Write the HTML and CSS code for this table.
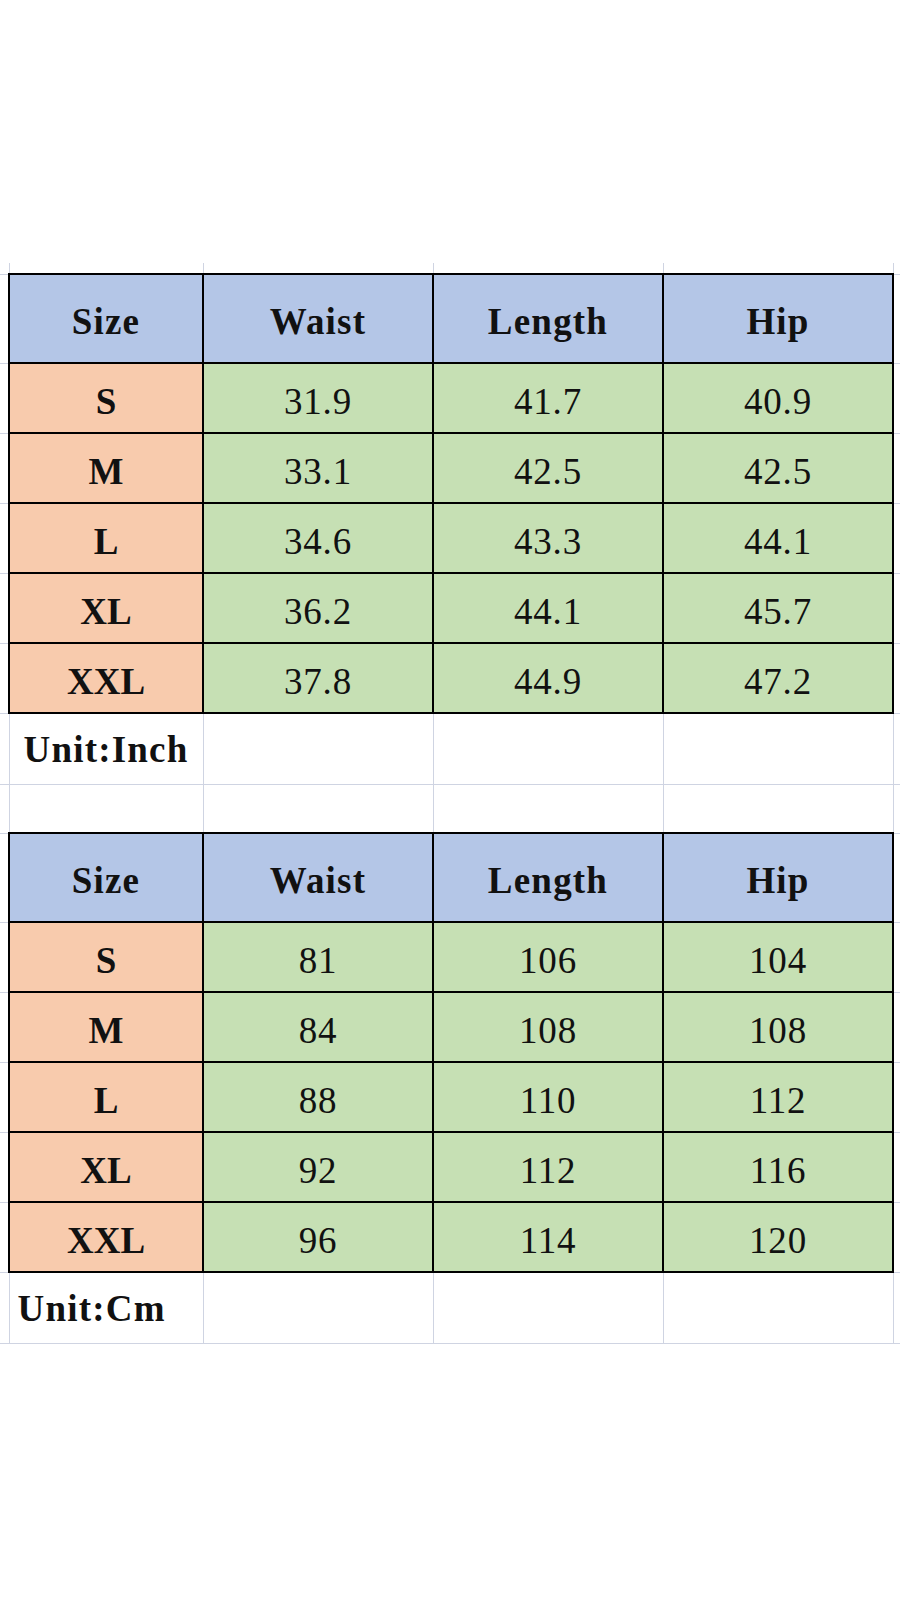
FILE: index.html
```html
<!DOCTYPE html>
<html>
<head>
<meta charset="utf-8">
<link rel="stylesheet" href="styles.css">
</head>
<body>
<div class="top-space"></div>
<table class="sheet">
  <colgroup>
    <col class="c-edge-l"><col class="c-size"><col class="c-val"><col class="c-val"><col class="c-val"><col class="c-edge-r">
  </colgroup>
  <tbody>
    <tr class="r-tick"><td></td><td></td><td></td><td></td><td></td><td></td></tr>

    <tr class="r-head"><td></td><td class="b head">Size</td><td class="b head">Waist</td><td class="b head">Length</td><td class="b head">Hip</td><td></td></tr>
    <tr class="r-data"><td></td><td class="b size">S</td><td class="b num">31.9</td><td class="b num">41.7</td><td class="b num">40.9</td><td></td></tr>
    <tr class="r-data"><td></td><td class="b size">M</td><td class="b num">33.1</td><td class="b num">42.5</td><td class="b num">42.5</td><td></td></tr>
    <tr class="r-data"><td></td><td class="b size">L</td><td class="b num">34.6</td><td class="b num">43.3</td><td class="b num">44.1</td><td></td></tr>
    <tr class="r-data"><td></td><td class="b size">XL</td><td class="b num">36.2</td><td class="b num">44.1</td><td class="b num">45.7</td><td></td></tr>
    <tr class="r-data"><td></td><td class="b size">XXL</td><td class="b num">37.8</td><td class="b num">44.9</td><td class="b num">47.2</td><td></td></tr>
    <tr class="r-unit"><td></td><td class="unit center">Unit:Inch</td><td></td><td></td><td></td><td></td></tr>
    <tr class="r-blank"><td></td><td></td><td></td><td></td><td></td><td></td></tr>

    <tr class="r-head"><td></td><td class="b head">Size</td><td class="b head">Waist</td><td class="b head">Length</td><td class="b head">Hip</td><td></td></tr>
    <tr class="r-data"><td></td><td class="b size">S</td><td class="b num">81</td><td class="b num">106</td><td class="b num">104</td><td></td></tr>
    <tr class="r-data"><td></td><td class="b size">M</td><td class="b num">84</td><td class="b num">108</td><td class="b num">108</td><td></td></tr>
    <tr class="r-data"><td></td><td class="b size">L</td><td class="b num">88</td><td class="b num">110</td><td class="b num">112</td><td></td></tr>
    <tr class="r-data"><td></td><td class="b size">XL</td><td class="b num">92</td><td class="b num">112</td><td class="b num">116</td><td></td></tr>
    <tr class="r-data"><td></td><td class="b size">XXL</td><td class="b num">96</td><td class="b num">114</td><td class="b num">120</td><td></td></tr>
    <tr class="r-unit"><td></td><td class="unit left">Unit:Cm</td><td></td><td></td><td></td><td></td></tr>
  </tbody>
</table>
</body>
</html>
```

FILE: styles.css
```css
html, body {
  margin: 0;
  padding: 0;
  background: #ffffff;
}

body {
  width: 900px;
  font-family: "Liberation Serif", "Times New Roman", serif;
  color: #111111;
}

.top-space {
  height: 263px;
}

.sheet {
  border-collapse: collapse;
  table-layout: fixed;
  width: 900px;
}

.c-edge-l { width: 9px; }
.c-size { width: 194px; }
.c-val { width: 230px; }
.c-edge-r { width: 7px; }

.sheet td {
  border: 1px solid #cfd4e2;
  padding: 0;
  text-align: center;
  vertical-align: middle;
  font-size: 37px;
  line-height: 1;
  white-space: nowrap;
  overflow: hidden;
}

.r-tick td {
  border-top: none;
  height: 10px;
}

.r-tick td:first-child,
.r-tick td:last-child {
  border-left: none;
  border-right: none;
}

.sheet td:first-child { border-left: none; }
.sheet td:last-child { border-right: none; }

.r-head td { height: 81px; }
.r-data td { height: 62px; }
.r-unit td { height: 70px; }
.r-blank td { height: 47px; }

.sheet td.b {
  border: 2px solid #000000;
  padding-top: 6px;
}

.head {
  background: #b4c6e7;
  font-weight: bold;
  font-size: 38px;
  letter-spacing: 1.2px;
}

.size {
  background: #f8cbad;
  font-weight: bold;
  font-size: 38px;
}

.num {
  background: #c6e0b4;
  font-weight: normal;
  font-size: 39px;
  letter-spacing: 0.8px;
}

.unit {
  font-weight: bold;
  font-size: 41px;
  letter-spacing: 1.2px;
  padding-top: 2px;
}

.unit.center { text-align: center; }
.unit.left { text-align: left; padding-left: 8px; }
```
